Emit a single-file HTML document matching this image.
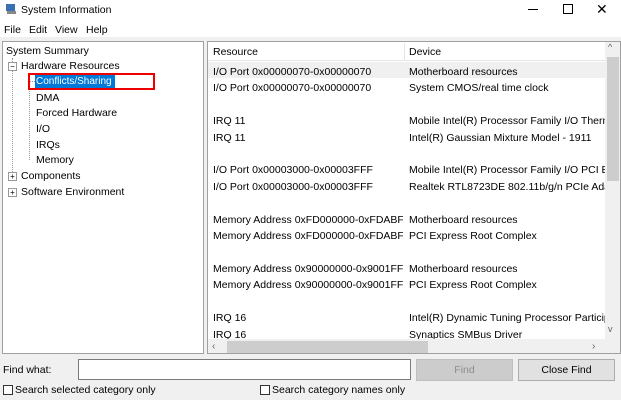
<!DOCTYPE html><html><head><style>
*{margin:0;padding:0;box-sizing:border-box}
body{width:621px;height:400px;background:#f0f0f0;font-family:"Liberation Sans",sans-serif;font-size:10.5px;color:#000;position:relative;overflow:hidden}
.a{position:absolute;white-space:nowrap}
</style></head><body>
<div class="a" style="left:0;top:0;width:621px;height:20px;background:#fff"></div>
<svg class="a" style="left:5px;top:3px" width="12" height="12"><rect x="1" y="1" width="9" height="7" fill="#3a6fb0"/><rect x="2" y="8" width="9" height="3" fill="#888"/></svg>
<div class="a" style="left:21px;top:4px;font-size:10.5px">System Information</div>
<div class="a" style="left:528px;top:9px;width:10px;height:1px;background:#000"></div>
<div class="a" style="left:563px;top:4px;width:10px;height:10px;border:1px solid #000"></div>
<div class="a" style="left:596px;top:1px;font-size:14px">✕</div>
<div class="a" style="left:0;top:20px;width:621px;height:17px;background:#fff"></div>
<div class="a" style="left:4px;top:24px">File</div><div class="a" style="left:29px;top:24px">Edit</div><div class="a" style="left:55px;top:24px">View</div><div class="a" style="left:86px;top:24px">Help</div>
<div class="a" style="left:2px;top:41px;width:202px;height:313px;background:#fff;border:1px solid #a0a0a0"></div>
<div class="a" style="left:6px;top:45px">System Summary</div>
<div class="a" style="left:12px;top:58px;width:1px;height:122px;border-left:1px dotted #999"></div>
<div class="a" style="left:29px;top:74px;width:1px;height:86px;border-left:1px dotted #999"></div>
<div class="a" style="left:8px;top:62px;width:9px;height:9px;border:1px solid #999;background:#fff;font-size:8px;line-height:7px;text-align:center">−</div>
<div class="a" style="left:21px;top:60px">Hardware Resources</div>
<div class="a" style="left:30px;top:81px;width:5px;border-top:1px dotted #999"></div>
<div class="a" style="left:35px;top:75px;width:80px;height:14px;background:#0078d7"></div>
<div class="a" style="left:36px;top:76px;color:#fff;font-size:10px">Conflicts/Sharing</div>
<div class="a" style="left:28px;top:73px;width:127px;height:17px;border:2px solid #e00"></div>
<div class="a" style="left:36px;top:92px">DMA</div>
<div class="a" style="left:36px;top:107px">Forced Hardware</div>
<div class="a" style="left:36px;top:123px">I/O</div>
<div class="a" style="left:36px;top:139px">IRQs</div>
<div class="a" style="left:36px;top:154px">Memory</div>
<div class="a" style="left:8px;top:172px;width:9px;height:9px;border:1px solid #999;background:#fff;font-size:8px;line-height:7px;text-align:center">+</div>
<div class="a" style="left:21px;top:170px">Components</div>
<div class="a" style="left:8px;top:188px;width:9px;height:9px;border:1px solid #999;background:#fff;font-size:8px;line-height:7px;text-align:center">+</div>
<div class="a" style="left:21px;top:186px">Software Environment</div>
<div class="a" style="left:207px;top:41px;width:414px;height:313px;background:#fff;border:1px solid #a0a0a0;overflow:hidden">
<div class="a" style="left:0;top:0;width:412px;height:19px;border-bottom:1px solid #e5e5e5"></div>
<div class="a" style="left:196px;top:1px;width:1px;height:17px;background:#e5e5e5"></div>
<div class="a" style="left:5px;top:4px">Resource</div><div class="a" style="left:201px;top:4px">Device</div>
<div class="a" style="left:0;top:20px;width:397px;height:16px;background:#f0f0f0"></div>
<div class="a" style="left:5px;top:22px;line-height:16.4px;width:190px;overflow:hidden">I/O Port 0x00000070-0x00000070<br>I/O Port 0x00000070-0x00000070<br><br>IRQ 11<br>IRQ 11<br><br>I/O Port 0x00003000-0x00003FFF<br>I/O Port 0x00003000-0x00003FFF<br><br>Memory Address 0xFD000000-0xFDABF...<br>Memory Address 0xFD000000-0xFDABF...<br><br>Memory Address 0x90000000-0x9001FF...<br>Memory Address 0x90000000-0x9001FF...<br><br>IRQ 16<br>IRQ 16</div>
<div class="a" style="left:201px;top:22px;line-height:16.4px">Motherboard resources<br>System CMOS/real time clock<br><br>Mobile Intel(R) Processor Family I/O Thermal<br>Intel(R) Gaussian Mixture Model - 1911<br><br>Mobile Intel(R) Processor Family I/O PCI Express<br>Realtek RTL8723DE 802.11b/g/n PCIe Adapter<br><br>Motherboard resources<br>PCI Express Root Complex<br><br>Motherboard resources<br>PCI Express Root Complex<br><br>Intel(R) Dynamic Tuning Processor Participant<br>Synaptics SMBus Driver</div>
<div class="a" style="left:397px;top:0;width:16px;height:297px;background:#f0f0f0"></div>
<div class="a" style="left:399px;top:15px;width:12px;height:124px;background:#cdcdcd"></div>
<div class="a" style="left:400px;top:0px;font-size:9px;color:#606060">^</div>
<div class="a" style="left:400px;top:282px;font-size:9px;color:#606060">v</div>
<div class="a" style="left:0;top:297px;width:413px;height:16px;background:#f0f0f0"></div>
<div class="a" style="left:19px;top:299px;width:201px;height:12px;background:#cdcdcd"></div>
<div class="a" style="left:4px;top:299px;font-size:10px;color:#606060">‹</div>
<div class="a" style="left:384px;top:299px;font-size:10px;color:#606060">›</div>
</div>
<div class="a" style="left:3px;top:364px">Find what:</div>
<div class="a" style="left:78px;top:359px;width:333px;height:21px;background:#fff;border:1px solid #7a7a7a"></div>
<div class="a" style="left:416px;top:359px;width:97px;height:22px;background:#cccccc;border:1px solid #bfbfbf;color:#8d8d8d;text-align:center;line-height:20px">Find</div>
<div class="a" style="left:518px;top:359px;width:97px;height:22px;background:#e1e1e1;border:1px solid #adadad;text-align:center;line-height:20px">Close Find</div>
<div class="a" style="left:3px;top:385px;width:10px;height:10px;border:1px solid #333;background:#fff"></div>
<div class="a" style="left:15px;top:384px">Search selected category only</div>
<div class="a" style="left:260px;top:385px;width:10px;height:10px;border:1px solid #333;background:#fff"></div>
<div class="a" style="left:272px;top:384px">Search category names only</div>
</body></html>
